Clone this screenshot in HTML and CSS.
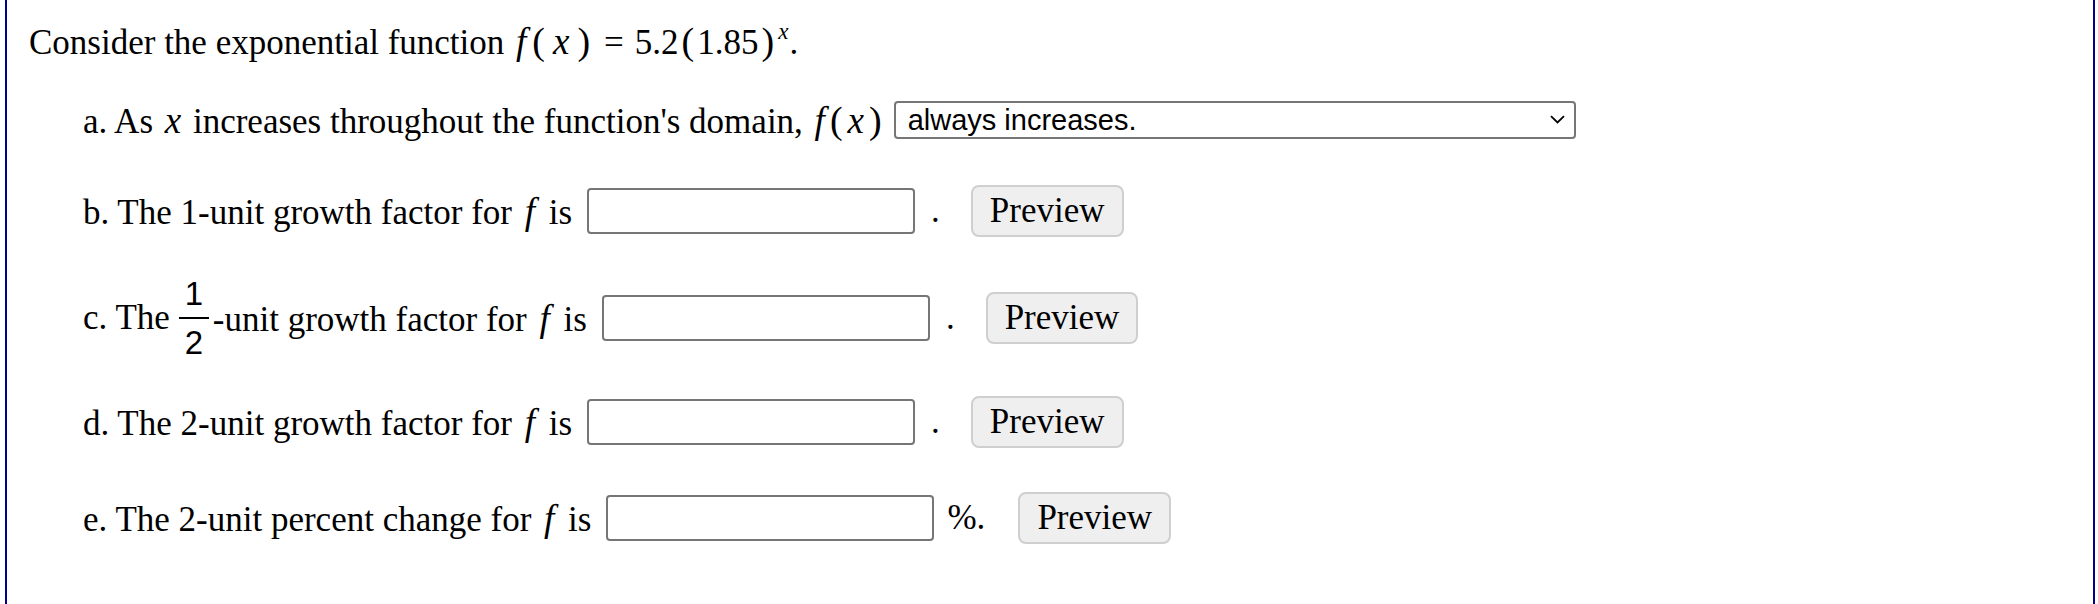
FILE: index.html
```html
<!DOCTYPE html>
<html>
<head>
<meta charset="utf-8">
<link rel="stylesheet" href="styles.css">
</head>
<body>
<div class="page">
  <div class="row row-intro">
    <span>Consider the exponential function <i class="mi mf">f</i><span class="mo">(</span><i class="mi mx">x</i><span class="mo">)</span><span class="eq">=</span>5.2<span class="mo">(</span>1.85<span class="mo">)</span><sup class="sup"><i class="mi">x</i></sup>.</span>
  </div>

  <div class="row row-a part">
    <span>a. As <i class="mi mx">x</i> increases throughout the function's domain, <i class="mi mf">f</i><span class="mo">(</span><i class="mi mx">x</i><span class="mo">)</span></span>
    <span class="select-wrap">
      <select class="select">
        <option>always increases.</option>
      </select>
      <svg class="chevron" width="15" height="9" viewBox="0 0 15 9"><path d="M1 1.2 L7.5 7.4 L14 1.2" fill="none" stroke="#000" stroke-width="1.8"/></svg>
    </span>
  </div>

  <div class="row row-b part">
    <span>b. The 1-unit growth factor for <i class="mi ft">f</i> is</span>
    <input class="answer" type="text">
    <span class="punct">.</span>
    <button class="preview">Preview</button>
  </div>

  <div class="row row-c part">
    <span>c. The</span>
    <span class="frac"><span class="num">1</span><span class="bar"></span><span class="den">2</span></span>
    <span>-unit growth factor for <i class="mi ft">f</i> is</span>
    <input class="answer" type="text">
    <span class="punct">.</span>
    <button class="preview">Preview</button>
  </div>

  <div class="row row-d part">
    <span>d. The 2-unit growth factor for <i class="mi ft">f</i> is</span>
    <input class="answer" type="text">
    <span class="punct">.</span>
    <button class="preview">Preview</button>
  </div>

  <div class="row row-e part">
    <span>e. The 2-unit percent change for <i class="mi ft">f</i> is</span>
    <input class="answer" type="text">
    <span class="punct pct">%.</span>
    <button class="preview">Preview</button>
  </div>
</div>
</body>
</html>
```

FILE: styles.css
```css
html, body {
  margin: 0;
  padding: 0;
  background: #ffffff;
}

body {
  font-family: "Liberation Serif", "Times New Roman", serif;
  font-size: 35px;
  color: #000;
}

.page {
  margin: 0 3px 0 5px;
  min-height: 604px;
  box-sizing: border-box;
  border-left: 2px solid #00008b;
  border-right: 2px solid #00008b;
  padding: 15px 0 0 22px;
}

.row {
  display: flex;
  align-items: center;
  height: 52px;
  white-space: nowrap;
}

.part {
  margin-left: 54px;
}

.row-a { margin-top: 27px; }
.row-b { margin-top: 39px; }
.row-c { margin-top: 55px; }
.row-d { margin-top: 52px; }
.row-e { margin-top: 44px; }

.mi {
  font-style: italic;
  padding: 0 2px;
}

.mx {
  font-size: 37px;
  padding: 0 3px;
}

.mf {
  font-size: 37px;
  padding: 0 3px 0 3px;
}

.ft {
  font-size: 37px;
  padding: 0 5px 0 4px;
}

.mo {
  font-size: 38px;
  padding: 0 2px;
}

.row-intro .mo {
  padding: 0 3px;
}

.row-intro .mx {
  padding: 0 5px;
}

.eq {
  padding: 0 11px;
}

.sup {
  font-size: 23px;
  vertical-align: 15px;
  line-height: 0;
}

.sup .mi {
  padding: 0 1px;
}

.select-wrap {
  position: relative;
  display: flex;
  margin-left: 10px;
}

.select {
  appearance: none;
  -webkit-appearance: none;
  width: 682px;
  height: 38px;
  box-sizing: border-box;
  border: 2px solid #767676;
  border-radius: 4px;
  background: #fff;
  font-family: "Liberation Sans", Arial, sans-serif;
  font-size: 29px;
  line-height: 32px;
  color: #000;
  padding: 0 0 0 12px;
  margin: 0;
}

.chevron {
  position: absolute;
  right: 11px;
  top: 14px;
  pointer-events: none;
}

.answer {
  width: 328px;
  height: 46px;
  box-sizing: border-box;
  border: 2px solid #767676;
  border-radius: 4px;
  background: #fff;
  margin: 0 0 0 15px;
  padding: 0 6px;
  font-size: 28px;
}

.punct {
  margin-left: 16px;
}

.pct {
  margin-left: 13px;
}

.preview {
  height: 52px;
  box-sizing: border-box;
  margin-left: 31px;
  padding: 0 17px;
  border: 2px solid #cfcfcf;
  border-radius: 8px;
  background: #efefef;
  font-family: "Liberation Serif", "Times New Roman", serif;
  font-size: 35px;
  color: #000;
}

.row-e .preview {
  margin-left: 33px;
}

.frac {
  display: inline-flex;
  flex-direction: column;
  align-items: center;
  margin: 0 4px 0 9px;
  font-family: "Liberation Sans", Arial, sans-serif;
  font-size: 33px;
  line-height: 1;
}

.num {
  padding-bottom: 7px;
}

.bar {
  width: 30px;
  height: 2px;
  background: #000;
}

.den {
  padding-top: 7px;
}
```
